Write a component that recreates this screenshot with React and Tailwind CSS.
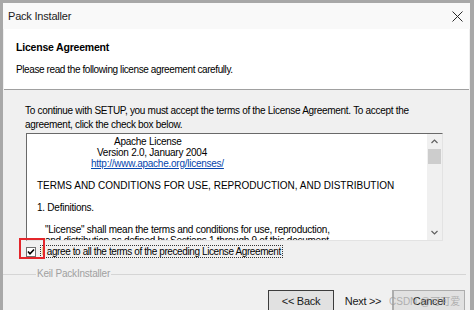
const font = { fontFamily: '"Liberation Sans", Arial, sans-serif' };

const licenseLines = [
  { text: "Apache License", pad: "pl-[87px]" },
  { text: "Version 2.0, January 2004", pad: "pl-[70px]" },
  { text: "http://www.apache.org/licenses/", pad: "pl-[64px]", link: true },
  { text: "\u00a0", pad: "" },
  { text: "TERMS AND CONDITIONS FOR USE, REPRODUCTION, AND DISTRIBUTION", pad: "pl-[10px]", caps: true },
  { text: "\u00a0", pad: "" },
  { text: "1. Definitions.", pad: "pl-[10px]" },
  { text: "\u00a0", pad: "" },
  { text: "\"License\" shall mean the terms and conditions for use, reproduction,", pad: "pl-[18px]" },
  { text: "and distribution as defined by Sections 1 through 9 of this document.", pad: "pl-[18px]" },
];

const Button = ({ children, className }) => (
  <div
    className={`h-[22px] flex items-center justify-center text-[11px] tracking-[-0.3px] text-[#1a1a1a] ${className}`}
  >
    {children}
  </div>
);

export default function App() {
  return (
    <div
      className="w-[474px] h-[310px] overflow-hidden bg-[#a8a8a8] pt-[3px] pl-[3px] pr-[4px]"
      style={font}
    >
      <div className="relative h-[320px] bg-[#f0f0f0] flex flex-col">
        {/* title bar */}
        <div className="h-[26px] shrink-0 bg-[#f9f9f9] flex items-center justify-between pl-[5px] pr-[7px]">
          <span className="text-[11px] tracking-[-0.2px] text-[#1b1b1b]">Pack Installer</span>
          <svg width="11" height="11" viewBox="0 0 11 11">
            <path d="M0.5 0.5 L10.5 10.5 M10.5 0.5 L0.5 10.5" stroke="#2a2a2a" strokeWidth="1" />
          </svg>
        </div>

        {/* header */}
        <div className="h-[61px] shrink-0 ml-[1px] mr-[1px] bg-white border-b border-[#a0a0a0] pl-[12px] pt-[11px]">
          <div className="text-[10.5px] font-bold tracking-[-0.2px] text-black leading-[14px]">License Agreement</div>
          <div className="text-[10px] tracking-[-0.4px] text-black leading-[14px] mt-[9px]">
            Please read the following license agreement carefully.
          </div>
        </div>

        {/* body */}
        <div className="pl-[22px] pt-[14px] text-[10px] tracking-[-0.3px] leading-[14px] text-black">
          <p>To continue with SETUP, you must accept the terms of the License Agreement. To accept the</p>
          <p>agreement, click the check box below.</p>
        </div>

        <div className="ml-[23px] mt-[1px] w-[417px] h-[108px] shrink-0 bg-white border border-t-[#696969] border-l-[#696969] border-r-[#e3e3e3] border-b-[#e3e3e3] flex overflow-hidden">
          <div className="flex-1 pt-[2px] text-[10px] leading-[11px] text-black whitespace-nowrap overflow-hidden">
            {licenseLines.map((l, i) => (
              <div key={i} className={`${l.pad} ${l.caps ? "" : "tracking-[-0.25px]"}`}>
                {l.link ? <span className="text-[#0645ad] underline">{l.text}</span> : l.text}
              </div>
            ))}
          </div>
          <div className="w-[15px] shrink-0 bg-[#f0f0f0] flex flex-col items-center">
            <svg width="15" height="15" viewBox="0 0 15 15">
              <path d="M4.5 9 L7.5 6 L10.5 9" fill="none" stroke="#606060" strokeWidth="1.2" />
            </svg>
            <div className="w-[13px] h-[15px] bg-[#cdcdcd]" />
            <div className="flex-1" />
            <svg width="15" height="15" viewBox="0 0 15 15">
              <path d="M4.5 6 L7.5 9 L10.5 6" fill="none" stroke="#606060" strokeWidth="1.2" />
            </svg>
          </div>
        </div>

        {/* checkbox row */}
        <div className="relative ml-[23px] mt-[4px] h-[13px] flex items-center">
          <div className="w-[10px] h-[10px] bg-white border border-[#707070] flex items-center justify-center">
            <svg width="8" height="8" viewBox="0 0 8 8">
              <path d="M1 3.5 L3 5.8 L7 1.5" fill="none" stroke="#000" strokeWidth="1.6" />
            </svg>
          </div>
          <div className="ml-[4px] h-[13px] px-[1px] border border-dotted border-[#333] flex items-center text-[10px] tracking-[-0.4px] text-black">
            I agree to all the terms of the preceding License Agreement
          </div>
          <div className="absolute left-[-7px] top-[-7px] w-[26px] h-[21px] border-2 border-[#e3262b]" />
        </div>

        {/* group line */}
        <div className="mt-[10px] h-[12px] flex items-center">
          <div className="w-[33px] border-t border-[#d5d5d5]" />
          <span className="px-[1px] text-[10px] tracking-[-0.2px] text-[#a0a0a0] leading-[12px]">Keil PackInstaller</span>
          <div className="flex-1 mr-[4px] border-t border-[#d5d5d5]" />
        </div>

        {/* buttons */}
        <div className="mt-[10px] flex pl-[265px]">
          <Button className="w-[66px] border border-[#3c3c3c] bg-[#e1e1e1]">&lt;&lt; Back</Button>
          <Button className="w-[59px] bg-[#f0f0f0] border-r border-[#adadad]">Next &gt;&gt;</Button>
          <Button className="w-[72px] border border-[#adadad] bg-[#e1e1e1]">Cancel</Button>
        </div>

        <span
          className="absolute left-[386px] top-[291px] text-[10px] text-[#9a9a9a] opacity-70"
          style={{ fontFamily: '"Liberation Sans", "Noto Sans CJK SC", sans-serif' }}
        >
          CSDN @可可爱向上
        </span>
      </div>
    </div>
  );
}
